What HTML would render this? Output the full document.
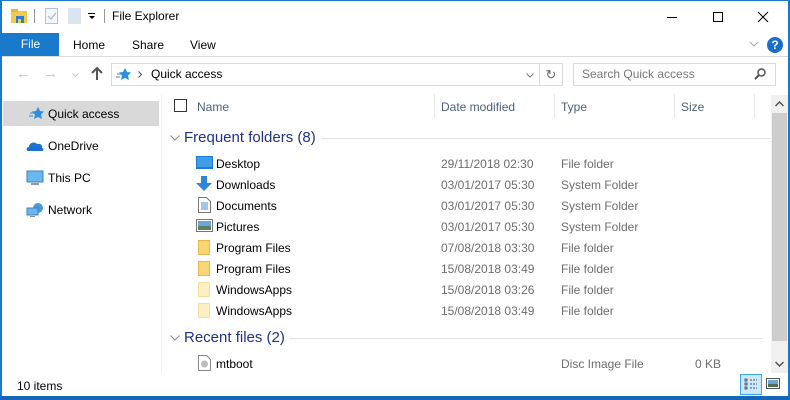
<!DOCTYPE html>
<html><head><meta charset="utf-8"><style>
*{margin:0;padding:0;box-sizing:border-box}
body{width:790px;height:400px;overflow:hidden;background:#fff;font-family:"Liberation Sans",sans-serif;font-size:12px;color:#000;position:relative}
.a{position:absolute;white-space:nowrap}
.g{color:#6d6d6d}
.hd{color:#4c607a}
.grp{color:#1e3287;font-size:15px}
</style></head><body>
<div class="a" style="left:0;top:0;width:790px;height:1px;background:#1979ca"></div>
<div class="a" style="left:0;top:0;width:2px;height:400px;background:#1979ca"></div>
<div class="a" style="left:788px;top:0;width:2px;height:400px;background:#1979ca"></div>
<div class="a" style="left:0;top:396px;width:790px;height:4px;background:#1565b8"></div>

<svg class="a" style="left:10px;top:8px" width="18" height="16"><rect x="1" y="3" width="16" height="12" fill="#f4c94c"/><rect x="1" y="1" width="7" height="3" fill="#e8b53a"/><rect x="6" y="8" width="8" height="7" fill="#2a7fd4"/><rect x="8" y="11" width="3" height="4" fill="#f4c94c"/></svg>
<div class="a" style="left:34px;top:9px;width:1px;height:14px;background:#999"></div>
<svg class="a" style="left:45px;top:8px" width="14" height="16"><rect x="0.5" y="0.5" width="12" height="15" fill="#f3f6fa" stroke="#b7c3d3"/><path d="M3 8l3 3 5-6" stroke="#9fb3cc" fill="none"/></svg>
<svg class="a" style="left:68px;top:8px" width="14" height="16"><rect x="0" y="0" width="13" height="16" fill="#dbe5f2"/></svg>
<svg class="a" style="left:88px;top:13px" width="8" height="8"><path d="M0 .5h7" stroke="#000"/><path d="M1 3h6l-3 3z" fill="#000"/></svg>
<div class="a" style="left:104px;top:9px;width:1px;height:14px;background:#999"></div>
<div class="a" style="left:112px;top:9px;font-size:12px">File Explorer</div>
<div class="a" style="left:667px;top:17px;width:10px;height:1px;background:#000"></div>
<div class="a" style="left:713px;top:12px;width:10px;height:10px;border:1px solid #000"></div>
<svg class="a" style="left:757px;top:11px" width="12" height="12"><path d="M1 1L11 11M11 1L1 11" stroke="#000"/></svg>

<div class="a" style="left:2px;top:33px;width:57px;height:23px;background:#1979ca;color:#fff;text-align:center;line-height:23px">File</div>
<div class="a" style="left:73px;top:38px">Home</div>
<div class="a" style="left:132px;top:38px">Share</div>
<div class="a" style="left:190px;top:38px">View</div>
<svg class="a" style="left:749px;top:41px" width="10" height="6"><path d="M1 1l4 4 4-4" stroke="#aaa" fill="none"/></svg>
<div class="a" style="left:767px;top:37px;width:16px;height:16px;border-radius:50%;background:#1a6fc9;color:#fff;font-weight:bold;font-size:12px;text-align:center;line-height:16px">?</div>
<div class="a" style="left:2px;top:56px;width:786px;height:1px;background:#dadada"></div>

<div class="a" style="left:16px;top:65px;color:#c2c2c2;font-size:15px">&#8592;</div>
<div class="a" style="left:43px;top:65px;color:#c2c2c2;font-size:15px">&#8594;</div>
<svg class="a" style="left:72px;top:73px" width="7" height="4"><path d="M.5.5l3 3 3-3" stroke="#c2c2c2" fill="none"/></svg>
<svg class="a" style="left:91px;top:66px" width="12" height="14"><path d="M6 14V2M1 7l5-5 5 5" stroke="#555" stroke-width="2" fill="none"/></svg>
<div class="a" style="left:111px;top:63px;width:429px;height:23px;border:1px solid #d9d9d9"></div>
<svg class="a" style="left:116px;top:67px" width="16" height="15"><path d="M9 1l2 4 4 .5-3 3 1 4.5-4-2-4 2 1-4.5-3-3 4-.5z" fill="#2b8ee0"/><path d="M1 7h4M0 10h4" stroke="#2b8ee0"/></svg>
<svg class="a" style="left:138px;top:71px" width="4" height="7"><path d="M.5.5l3 3-3 3" stroke="#555" fill="none"/></svg>
<div class="a" style="left:151px;top:67px">Quick access</div>
<svg class="a" style="left:526px;top:73px" width="8" height="5"><path d="M.5.5l3.5 3.5 3.5-3.5" stroke="#777" fill="none"/></svg>
<div class="a" style="left:539px;top:63px;width:24px;height:23px;border:1px solid #d9d9d9;text-align:center;line-height:21px;color:#666;font-size:13px">&#8635;</div>
<div class="a" style="left:573px;top:63px;width:203px;height:23px;border:1px solid #d9d9d9"></div>
<div class="a" style="left:582px;top:67px;color:#777">Search Quick access</div>
<svg class="a" style="left:753px;top:67px" width="14" height="14"><circle cx="8.5" cy="5.5" r="3.5" stroke="#555" fill="none" stroke-width="1.5"/><path d="M6 8l-4 4" stroke="#555" stroke-width="2"/></svg>

<div class="a" style="left:3px;top:101px;width:156px;height:25px;background:#d9d9d9"></div>
<svg class="a" style="left:29px;top:106px" width="16" height="15"><path d="M9 1l2 4 4 .5-3 3 1 4.5-4-2-4 2 1-4.5-3-3 4-.5z" fill="#2b8ee0"/><path d="M1 7h4M0 10h4" stroke="#2b8ee0"/></svg>
<div class="a" style="left:48px;top:107px">Quick access</div>
<svg class="a" style="left:26px;top:140px" width="18" height="12"><path d="M2 11c-2 0-2-4 1-4 0-4 5-6 8-3 3-1 6 1 5 4 2 0 2 3 0 3z" fill="#1b72d0"/></svg>
<div class="a" style="left:48px;top:139px">OneDrive</div>
<svg class="a" style="left:26px;top:170px" width="18" height="16"><rect x="1" y="1" width="16" height="11" fill="#6ab8ec" stroke="#3c7fc0"/><rect x="5" y="13" width="8" height="2" fill="#999"/></svg>
<div class="a" style="left:48px;top:171px">This PC</div>
<svg class="a" style="left:26px;top:202px" width="18" height="16"><circle cx="12" cy="6" r="5" fill="#4a9ad8"/><rect x="1" y="6" width="11" height="7" fill="#6ab8ec" stroke="#3c7fc0"/><rect x="4" y="14" width="5" height="1" fill="#888"/></svg>
<div class="a" style="left:48px;top:203px">Network</div>
<div class="a" style="left:161px;top:95px;width:1px;height:278px;background:#f0f0f0"></div>

<div class="a" style="left:174px;top:99px;width:13px;height:13px;border:1px solid #333"></div>
<div class="a hd" style="left:197px;top:100px">Name</div>
<div class="a" style="left:434px;top:94px;width:1px;height:24px;background:#e5e5e5"></div>
<div class="a hd" style="left:441px;top:100px">Date modified</div>
<div class="a" style="left:554px;top:94px;width:1px;height:24px;background:#e5e5e5"></div>
<div class="a hd" style="left:561px;top:100px">Type</div>
<div class="a" style="left:674px;top:94px;width:1px;height:24px;background:#e5e5e5"></div>
<div class="a hd" style="left:681px;top:100px">Size</div>
<div class="a" style="left:754px;top:94px;width:1px;height:24px;background:#e5e5e5"></div>

<svg class="a" style="left:170px;top:135px" width="10" height="6"><path d="M.5.5l4.5 4.5 4.5-4.5" stroke="#888" fill="none"/></svg>
<div class="a grp" style="left:184px;top:129px">Frequent folders (8)</div>
<div class="a" style="left:321px;top:138px;width:450px;height:1px;background:#e2e2e2"></div>

<svg class="a" style="left:196px;top:156px" width="17" height="14"><rect x="0" y="0" width="17" height="13" fill="#1c7ad8"/><rect x="1" y="1" width="15" height="10" fill="#3e9ee8"/></svg>
<div class="a" style="left:216px;top:157px">Desktop</div>
<svg class="a" style="left:196px;top:176px" width="16" height="16"><rect x="5" y="0" width="6" height="8" fill="#2d86d9"/><path d="M0 7h16l-8 8z" fill="#2d86d9"/></svg>
<div class="a" style="left:216px;top:178px">Downloads</div>
<svg class="a" style="left:198px;top:197px" width="13" height="16"><path d="M.5.5h8l4 4v11H.5z" fill="#fff" stroke="#777"/><path d="M3 6h7M3 8h7M3 10h7M3 12h7" stroke="#3b8fd6"/></svg>
<div class="a" style="left:216px;top:199px">Documents</div>
<svg class="a" style="left:196px;top:219px" width="17" height="14"><rect x=".5" y=".5" width="16" height="12" fill="#fff" stroke="#777"/><rect x="2" y="2" width="13" height="5" fill="#6aa7d8"/><rect x="2" y="7" width="13" height="4" fill="#5d8060"/></svg>
<div class="a" style="left:216px;top:220px">Pictures</div>
<div class="a" style="left:198px;top:240px;width:12px;height:15px;background:#f9d673;border:1px solid #e8b84a"></div>
<div class="a" style="left:216px;top:241px">Program Files</div>
<div class="a" style="left:198px;top:261px;width:12px;height:15px;background:#f9d673;border:1px solid #e8b84a"></div>
<div class="a" style="left:216px;top:262px">Program Files</div>
<div class="a" style="left:198px;top:282px;width:12px;height:15px;background:#fcefc2;border:1px solid #f3dea0"></div>
<div class="a" style="left:216px;top:283px">WindowsApps</div>
<div class="a" style="left:198px;top:303px;width:12px;height:15px;background:#fcefc2;border:1px solid #f3dea0"></div>
<div class="a" style="left:216px;top:304px">WindowsApps</div>

<div class="a g" style="left:441px;top:157px">29/11/2018 02:30</div>
<div class="a g" style="left:441px;top:178px">03/01/2017 05:30</div>
<div class="a g" style="left:441px;top:199px">03/01/2017 05:30</div>
<div class="a g" style="left:441px;top:220px">03/01/2017 05:30</div>
<div class="a g" style="left:441px;top:241px">07/08/2018 03:30</div>
<div class="a g" style="left:441px;top:262px">15/08/2018 03:49</div>
<div class="a g" style="left:441px;top:283px">15/08/2018 03:26</div>
<div class="a g" style="left:441px;top:304px">15/08/2018 03:49</div>
<div class="a g" style="left:561px;top:157px">File folder</div>
<div class="a g" style="left:561px;top:178px">System Folder</div>
<div class="a g" style="left:561px;top:199px">System Folder</div>
<div class="a g" style="left:561px;top:220px">System Folder</div>
<div class="a g" style="left:561px;top:241px">File folder</div>
<div class="a g" style="left:561px;top:262px">File folder</div>
<div class="a g" style="left:561px;top:283px">File folder</div>
<div class="a g" style="left:561px;top:304px">File folder</div>

<svg class="a" style="left:170px;top:335px" width="10" height="6"><path d="M.5.5l4.5 4.5 4.5-4.5" stroke="#888" fill="none"/></svg>
<div class="a grp" style="left:184px;top:329px">Recent files (2)</div>
<div class="a" style="left:289px;top:338px;width:474px;height:1px;background:#e2e2e2"></div>
<svg class="a" style="left:198px;top:355px" width="13" height="16"><path d="M.5.5h8l4 4v11H.5z" fill="#fff" stroke="#888"/><circle cx="6.5" cy="9" r="3.5" fill="#bbb"/></svg>
<div class="a" style="left:216px;top:357px">mtboot</div>
<div class="a g" style="left:561px;top:357px">Disc Image File</div>
<div class="a g" style="left:695px;top:357px">0 KB</div>

<div class="a" style="left:771px;top:95px;width:17px;height:278px;background:#f0f0f0"></div>
<svg class="a" style="left:775px;top:101px" width="9" height="6"><path d="M.5 5l4-4 4 4" stroke="#555" fill="none" stroke-width="1.5"/></svg>
<div class="a" style="left:772px;top:113px;width:15px;height:228px;background:#cdcdcd"></div>
<svg class="a" style="left:775px;top:361px" width="9" height="6"><path d="M.5 1l4 4 4-4" stroke="#555" fill="none" stroke-width="1.5"/></svg>

<div class="a" style="left:17px;top:379px">10 items</div>
<div class="a" style="left:740px;top:374px;width:22px;height:21px;background:#cce8ff;border:1px solid #3fa4f0"></div>
<svg class="a" style="left:744px;top:378px" width="14" height="13"><path d="M1 1h2v2H1zM1 5h2v2H1zM1 9h2v2H1z" fill="none" stroke="#333" stroke-width=".8"/><path d="M6 2h7M6 6h7M6 10h7" stroke="#555" stroke-dasharray="2 1"/></svg>
<svg class="a" style="left:766px;top:378px" width="14" height="12"><rect x=".5" y=".5" width="13" height="10" fill="#fff" stroke="#555"/><rect x="2" y="2" width="10" height="4" fill="#6aa7d8"/><rect x="2" y="6" width="10" height="3" fill="#4d7050"/></svg>
</body></html>
